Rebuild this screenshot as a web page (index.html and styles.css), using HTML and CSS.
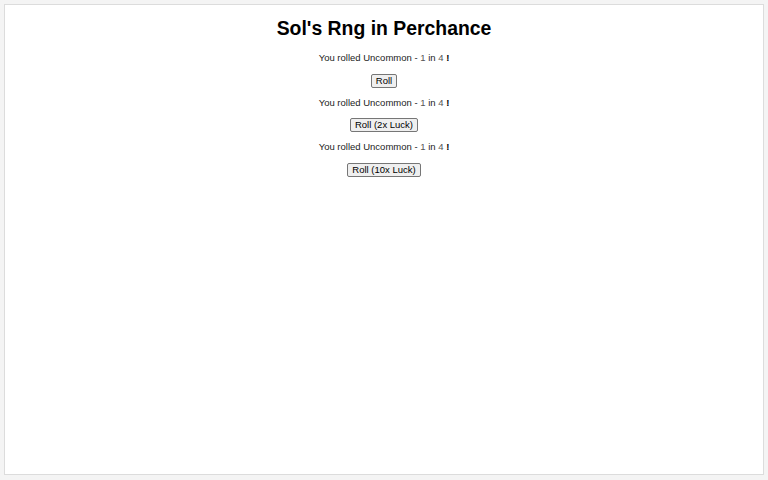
FILE: index.html
```html
<!DOCTYPE html>
<html>
<head>
<meta charset="utf-8">
<link rel="stylesheet" href="styles.css">
</head>
<body>
<div class="panel">
  <h1 class="title">Sol's Rng in Perchance</h1>
  <p class="result">You rolled Uncommon - <span class="num">1</span> in <span class="num">4</span> <b class="bang">!</b></p>
  <button class="roll">Roll</button>
  <p class="result">You rolled Uncommon - <span class="num">1</span> in <span class="num">4</span> <b class="bang">!</b></p>
  <button class="roll">Roll (2x Luck)</button>
  <p class="result">You rolled Uncommon - <span class="num">1</span> in <span class="num">4</span> <b class="bang">!</b></p>
  <button class="roll">Roll (10x Luck)</button>
</div>
</body>
</html>
```
FILE: styles.css
```css
html, body {
  margin: 0;
  padding: 0;
}
body {
  background: #f4f4f4;
  padding: 4px 4px 5px 4px;
  font-family: "Liberation Sans", Arial, sans-serif;
}
.panel {
  background: #fff;
  border: 1px solid #dcdcdc;
  height: 471px;
  box-sizing: border-box;
  display: flex;
  flex-direction: column;
  align-items: center;
  text-align: center;
}
.title {
  font-size: 19.4px;
  font-weight: bold;
  margin: 12px 0 0 0;
  line-height: 22px;
  color: #000;
}
.result {
  font-size: 9.5px;
  margin: 9px 0 0 0;
  line-height: 11px;
  color: #222;
}
.title + .result {
  margin-top: 13px;
}
.num {
  color: #555;
}
.bang {
  font-weight: bold;
  color: #000;
}
.roll {
  font-family: "Liberation Sans", Arial, sans-serif;
  font-size: 9.5px;
  margin: 10.5px 0 0 0;
  padding: 1px 4px;
  line-height: 10px;
  background: #efefef;
  border: 1px solid #767676;
  border-radius: 2px;
  color: #000;
}
```
